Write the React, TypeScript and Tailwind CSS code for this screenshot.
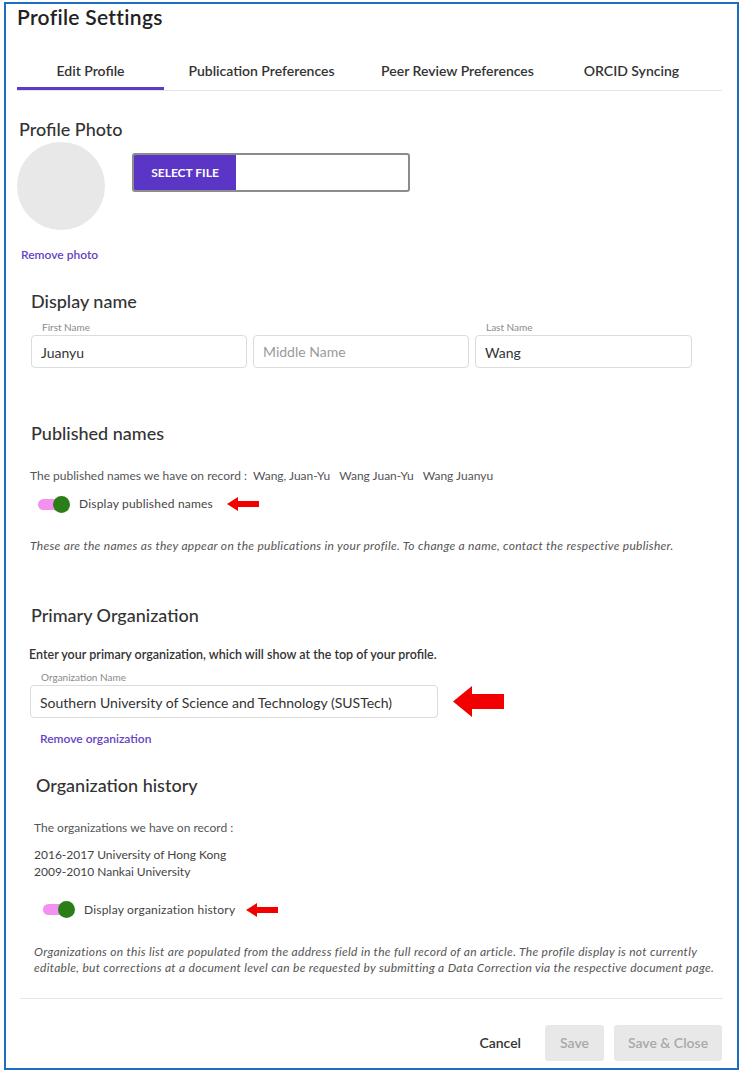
import React from 'react'

const TABS = [
  { label: 'Edit Profile', w: 'w-[147px]', active: true },
  { label: 'Publication Preferences', w: 'w-[195px]', active: false },
  { label: 'Peer Review Preferences', w: 'w-[197px]', active: false },
  { label: 'ORCID Syncing', w: 'w-[151px]', active: false },
]

function Arrow({ big = false }: { big?: boolean }) {
  if (big) {
    return (
      <svg width="51" height="31" viewBox="0 0 51 31">
        <polygon points="0,15.5 19,0 19,8 51,8 51,23 19,23 19,31" fill="#f20000" />
      </svg>
    )
  }
  return (
    <svg width="32" height="14" viewBox="0 0 32 14">
      <polygon points="0,7 11,0 11,4 32,4 32,10 11,10 11,14" fill="#f20000" />
    </svg>
  )
}

function Toggle() {
  return (
    <div className="relative w-[34px] h-[17px] shrink-0">
      <div className="absolute left-0 right-[6px] top-[3px] bottom-[3px] rounded-full bg-[#f291ef]" />
      <div className="absolute right-[2px] top-0 w-[17px] h-[17px] rounded-full bg-[#2b7d18]" />
    </div>
  )
}

function Field({ label, value, placeholder, className }: { label?: string; value?: string; placeholder?: string; className: string }) {
  return (
    <div className={`relative h-[33px] border border-[#dcdcdc] rounded-[4px] flex items-center px-[9px] ${className}`}>
      {label && (
        <span className="absolute left-[6px] top-[-15px] bg-white px-[4px] text-[10px] leading-[12px] text-[#8a8a8a]">
          {label}
        </span>
      )}
      {value ? (
        <span className="text-[14px] text-[#333] mt-[2px]">{value}</span>
      ) : (
        <span className="text-[14px] text-[#9a9a9a]">{placeholder}</span>
      )}
    </div>
  )
}

export default function App() {
  return (
    <div className="w-[741px] h-[1074px] bg-white pt-[2px] pl-[4px]" style={{ fontFamily: 'Lato, "Noto Sans", sans-serif' }}>
      <div className="w-[735px] h-[1068px] border-2 border-[#1b6ec2] flex flex-col">
        {/* header */}
        <h1 className="pl-[11px] text-[21px] tracking-[0.3px] leading-[24px] font-semibold text-[#222] mt-[1px]">Profile Settings</h1>

        {/* tabs */}
        <div className="ml-[11px] mr-[15px] mt-[21px] flex border-b border-[#e3e3e8]">
          {TABS.map((t) => (
            <div
              key={t.label}
              className={`${t.w} h-[40px] flex items-center justify-center text-[14px] font-semibold text-[#333] ${
                t.active ? 'border-b-[3px] border-[#5b3cc4] mb-[-1px] pt-[3px]' : ''
              }`}
            >
              {t.label}
            </div>
          ))}
        </div>

        {/* profile photo */}
        <div className="pl-[13px] mt-[28px]">
          <h2 className="text-[18px] leading-[20px] font-medium text-[#333]">Profile Photo</h2>
          <div className="flex mt-[3px]">
            <div className="w-[88px] h-[88px] rounded-full bg-[#e8e8e8] ml-[-2px]" />
            <div className="ml-[27px] mt-[11px] w-[278px] h-[39px] border-2 border-[#8c8c8c] rounded-[3px] flex overflow-hidden">
              <div className="w-[102px] h-full bg-[#5a35c6] flex items-center justify-center text-white text-[12px] font-bold">
                SELECT FILE
              </div>
            </div>
          </div>
          <div className="mt-[16px] ml-[2px] text-[12px] font-semibold text-[#6642c4]">Remove photo</div>
        </div>

        {/* display name */}
        <div className="pl-[25px] mt-[27px]">
          <h2 className="text-[18px] leading-[20px] font-medium text-[#333]">Display name</h2>
          <div className="flex gap-[6px] mt-[24px]">
            <Field label="First Name" value="Juanyu" className="w-[216px]" />
            <Field placeholder="Middle Name" className="w-[216px]" />
            <Field label="Last Name" value="Wang" className="w-[217px]" />
          </div>
        </div>

        {/* published names */}
        <div className="pl-[25px] mt-[55px]">
          <h2 className="text-[18px] leading-[20px] font-medium text-[#333]">Published names</h2>
          <p className="mt-[24px] text-[12px] text-[#555] ml-[-1px]">
            The published names we have on record :&nbsp; Wang, Juan-Yu&nbsp;&nbsp; Wang Juan-Yu&nbsp;&nbsp; Wang Juanyu
          </p>
          <div className="flex items-center mt-[10px] ml-[7px]">
            <Toggle />
            <span className="ml-[7px] text-[12px] tracking-[0.2px] text-[#444]">Display published names</span>
            <span className="ml-[14px] flex"><Arrow /></span>
          </div>
          <p className="mt-[25px] text-[12px] leading-[16px] tracking-[0.3px] italic text-[#555] ml-[-1px]">
            These are the names as they appear on the publications in your profile. To change a name, contact the respective publisher.
          </p>
        </div>

        {/* primary organization */}
        <div className="pl-[25px] mt-[51px]">
          <h2 className="text-[18px] leading-[20px] font-medium text-[#333]">Primary Organization</h2>
          <p className="mt-[21px] text-[12.5px] font-semibold text-[#333] ml-[-2px]">
            Enter your primary organization, which will show at the top of your profile.
          </p>
          <div className="flex items-center mt-[20px] ml-[-1px]">
            <Field label="Organization Name" value="Southern University of Science and Technology (SUSTech)" className="w-[408px] h-[32px]" />
            <span className="ml-[15px] flex"><Arrow big /></span>
          </div>
          <div className="mt-[12px] ml-[9px] text-[12px] font-semibold text-[#6642c4]">Remove organization</div>
        </div>

        {/* organization history */}
        <div className="pl-[30px] mt-[27px]">
          <h2 className="text-[18px] leading-[20px] font-medium text-[#333]">Organization history</h2>
          <p className="mt-[24px] text-[12px] text-[#555] ml-[-2px]">The organizations we have on record :</p>
          <div className="mt-[9px] text-[12px] leading-[17px] text-[#444] ml-[-2px]">
            <div>2016-2017 University of Hong Kong</div>
            <div>2009-2010 Nankai University</div>
          </div>
          <div className="flex items-center mt-[21px] ml-[7px]">
            <Toggle />
            <span className="ml-[7px] text-[12px] tracking-[0.2px] text-[#444]">Display organization history</span>
            <span className="ml-[11px] flex"><Arrow /></span>
          </div>
          <p className="mt-[25px] w-[700px] text-[12px] leading-[16px] tracking-[0.3px] italic text-[#555] ml-[-2px]">
            Organizations on this list are populated from the address field in the full record of an article. The profile display is not currently editable, but corrections at a document level can be requested by submitting a Data Correction via the respective document page.
          </p>
        </div>

        {/* footer */}
        <div className="mx-[14px] mt-[22px] border-t border-[#e6e6e6]" />
        <div className="flex items-center justify-end gap-[10px] mr-[15px] mt-[26px]">
          <span className="text-[14px] font-semibold text-[#333] mr-[14px]">Cancel</span>
          <div className="w-[59px] h-[36px] rounded-[3px] bg-[#e8e8e8] flex items-center justify-center text-[14px] font-semibold text-[#a9a9a9]">
            Save
          </div>
          <div className="w-[108px] h-[36px] rounded-[3px] bg-[#e8e8e8] flex items-center justify-center text-[14px] font-semibold text-[#a9a9a9]">
            Save &amp; Close
          </div>
        </div>
      </div>
    </div>
  )
}
